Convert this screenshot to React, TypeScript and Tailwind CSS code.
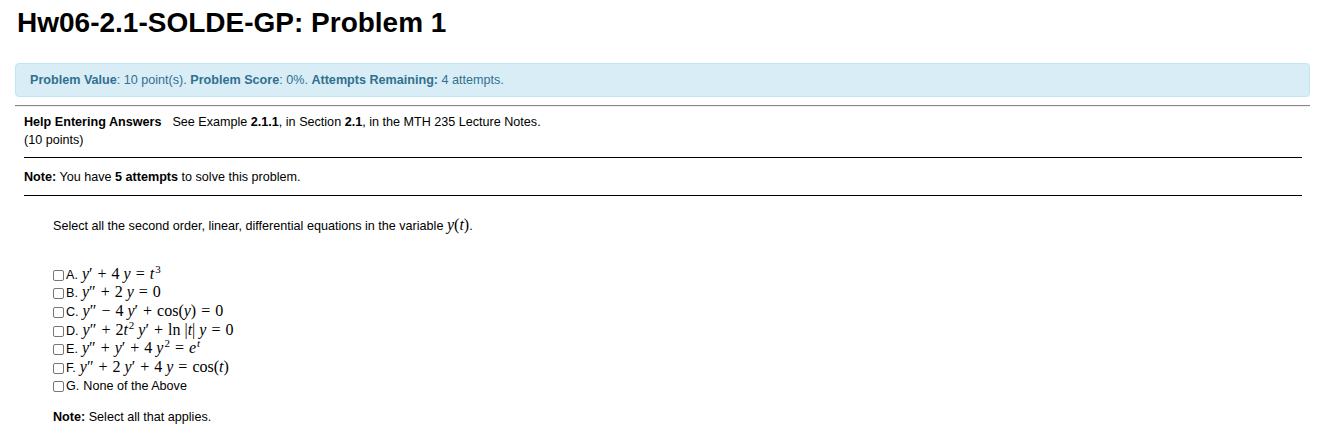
import type { ReactNode } from "react";

const serif = "font-['Liberation_Serif','DejaVu_Serif',serif]";

function V({ children }: { children: ReactNode }) {
  return <span className="italic">{children}</span>;
}

function Op({ children }: { children: ReactNode }) {
  return <span className="mx-[5px]">{children}</span>;
}

function Math({ children }: { children: ReactNode }) {
  return <span className={`${serif} text-[16px] leading-none`}>{children}</span>;
}

function Sup({ children }: { children: ReactNode }) {
  return <sup className="relative -top-[6px] ml-[1px] text-[11px]">{children}</sup>;
}

type Choice = { label: string; body: ReactNode };

const choices: Choice[] = [
  {
    label: "A.",
    body: (
      <Math>
        <V>y</V>′<Op>+</Op>4 <V>y</V>
        <Op>=</Op>
        <V>t</V>
        <Sup>3</Sup>
      </Math>
    ),
  },
  {
    label: "B.",
    body: (
      <Math>
        <V>y</V>″<Op>+</Op>2 <V>y</V>
        <Op>=</Op>0
      </Math>
    ),
  },
  {
    label: "C.",
    body: (
      <Math>
        <V>y</V>″<Op>−</Op>4 <V>y</V>′<Op>+</Op>cos(<V>y</V>)<Op>=</Op>0
      </Math>
    ),
  },
  {
    label: "D.",
    body: (
      <Math>
        <V>y</V>″<Op>+</Op>2<V>t</V>
        <Sup>2</Sup> <V>y</V>′<Op>+</Op>ln |<V>t</V>| <V>y</V>
        <Op>=</Op>0
      </Math>
    ),
  },
  {
    label: "E.",
    body: (
      <Math>
        <V>y</V>″<Op>+</Op>
        <V>y</V>′<Op>+</Op>4 <V>y</V>
        <Sup>2</Sup>
        <Op>=</Op>
        <V>e</V>
        <Sup>
          <V>t</V>
        </Sup>
      </Math>
    ),
  },
  {
    label: "F.",
    body: (
      <Math>
        <V>y</V>″<Op>+</Op>2 <V>y</V>′<Op>+</Op>4 <V>y</V>
        <Op>=</Op>cos(<V>t</V>)
      </Math>
    ),
  },
  { label: "G.", body: <span>None of the Above</span> },
];

export default function App() {
  return (
    <div className="min-h-screen bg-white font-['Liberation_Sans',Arial,sans-serif] text-[12.6px] text-black">
      <div className="w-[1295px] pl-[15px] box-content">
        <h1 className="pt-[7px] pl-[2px] text-[28px] font-bold leading-[31px] text-black">
          Hw06-2.1-SOLDE-GP: Problem 1
        </h1>

        <div className="mt-[25px] flex h-[34px] items-center rounded-[4px] border border-[#bce8f1] bg-[#d9edf7] pl-[14px] text-[#31708f]">
          <span>
            <b>Problem Value</b>: 10 point(s). <b>Problem Score</b>: 0%.{" "}
            <b>Attempts Remaining:</b> 4 attempts.
          </span>
        </div>

        <div className="mt-[8px] border-t border-[#888] border-b border-b-[#eee]" />

        <div className="w-[1278px] pl-[9px] box-content">
          <div className="pt-[6px] leading-[18px]">
            <p>
              <b className="mr-[11px]">Help Entering Answers</b>See Example <b>2.1.1</b>, in Section{" "}
              <b>2.1</b>, in the MTH 235 Lecture Notes.
            </p>
            <p>(10 points)</p>
          </div>

          <div className="mt-[8px] border-t border-black" />
          <p className="mt-[10px] leading-[18px]">
            <b>Note:</b> You have <b>5 attempts</b> to solve this problem.
          </p>
          <div className="mt-[9px] border-t border-black" />

          <div className="pl-[29px]">
            <p className="mt-[21px] leading-[18px]">
              Select all the second order, linear, differential equations in the variable{" "}
              <Math>
                <V>y</V>(<V>t</V>)
              </Math>
              .
            </p>

            <div className="mt-[31px]">
              {choices.map((c) => (
                <div key={c.label} className="flex h-[18.6px] items-center">
                  <span className="mr-[2px] inline-block h-[11px] w-[11px] rounded-[2px] border border-[#767676] bg-white" />
                  <span className="mr-[4px]">{c.label}</span>
                  <span>{c.body}</span>
                </div>
              ))}
            </div>

            <p className="mt-[12px] leading-[18px]">
              <b>Note:</b> Select all that applies.
            </p>
          </div>
        </div>
      </div>
    </div>
  );
}
